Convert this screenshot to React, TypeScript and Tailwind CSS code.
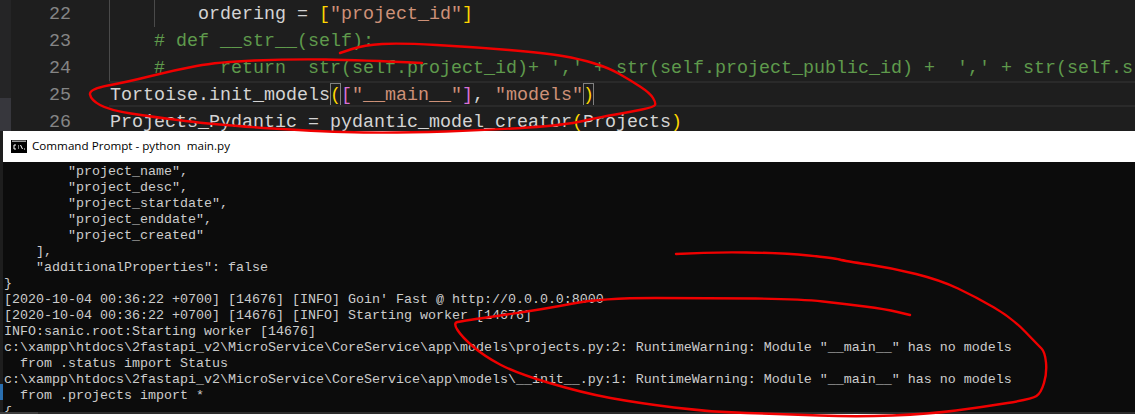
// Screenshot of an editor with a console in front of it, with red marker scribbles on top.
const CODE_FONT = "font-['Liberation_Mono',monospace] text-[18.33px]";

const COMMENT = "text-[#5f9a4c]";
const STRING = "text-[#ce9178]";
const GOLD = "text-[#ffd700]";
const PINK = "text-[#da70d6]";

// marker strokes, in page coordinates
const INK: [number, number][][] = [
  [
    [422, 63], [360, 60], [291, 59], [218, 62], [175, 70], [127, 82], [89, 89], [91, 100], [109, 110],
    [153, 117], [218, 125], [327, 132], [400, 133], [491, 130], [565, 125], [601, 117], [630, 112],
    [654, 107], [656, 103], [650, 93], [630, 80], [609, 68], [580, 59], [545, 53], [473, 47], [400, 43],
    [364, 45], [340, 53],
  ],
  [
    [676, 254], [710, 252], [783, 253], [834, 258], [845, 261], [892, 268], [940, 280], [976, 297],
    [1012, 318], [1038, 345], [1045, 352], [1047, 373], [1041, 393], [1032, 399], [983, 407], [929, 414],
    [856, 417], [783, 414], [710, 412], [638, 403], [583, 393], [516, 373], [484, 356], [462, 337],
    [453, 323], [462, 321], [545, 309], [601, 298], [710, 298], [801, 299], [845, 304], [885, 309], [910, 315],
  ],
];

function smooth(points: [number, number][]) {
  let d = `M${points[0][0]} ${points[0][1]}`;
  for (let i = 1; i < points.length - 1; i++) {
    const [x, y] = points[i];
    const [nx, ny] = points[i + 1];
    d += ` Q${x} ${y} ${(x + nx) / 2} ${(y + ny) / 2}`;
  }
  const last = points[points.length - 1];
  return `${d} L${last[0]} ${last[1]}`;
}

function MatchedParen({ children }: { children: string }) {
  return (
    <span className={`inline-block h-[26px] align-top leading-[25px] outline outline-1 -outline-offset-1 outline-[#808080] ${GOLD}`}>
      {children}
    </span>
  );
}

function CodeLine({
  no,
  guide = false,
  active = false,
  children,
}: {
  no: number;
  guide?: boolean;
  active?: boolean;
  children: React.ReactNode;
}) {
  return (
    <div className="flex h-[27px] leading-[29px]">
      <div className="w-[60px] flex-none text-right text-[#858585]">{no}</div>
      <div className="w-[38px] flex-none" />
      <div
        className={`min-w-0 flex-1 overflow-hidden whitespace-pre text-[#d4d4d4] ${guide ? "border-l border-[#4a4a4a]" : "pl-px"} ${
          active ? "box-border h-[26px] border-y-2 border-[#2a2a2a] leading-[25px]" : ""
        }`}
      >
        {children}
      </div>
    </div>
  );
}

function Editor() {
  return (
    <div className={`flex h-[131px] flex-none overflow-hidden bg-[#1e1e1e] ${CODE_FONT}`}>
      <div className="flex w-[11px] flex-none flex-col justify-end bg-[#252526]">
        <div className="h-[33px] bg-[#37373d]" />
      </div>
      <div className="min-w-0 flex-1">
        <CodeLine no={22} guide>
          <span className="ml-[44px] inline-block h-[27px] border-l border-[#4a4a4a] pl-[43px] align-top">
            ordering = <span className={GOLD}>[</span>
            <span className={STRING}>"project_id"</span>
            <span className={GOLD}>]</span>
          </span>
        </CodeLine>
        <CodeLine no={23} guide>
          <span className={`ml-[44px] ${COMMENT}`}># def __str__(self):</span>
        </CodeLine>
        <CodeLine no={24} guide>
          <span className={`ml-[44px] ${COMMENT}`}>
            {"#     return  str(self.project_id)+ ',' + str(self.project_public_id) +  ',' + str(self.s"}
          </span>
        </CodeLine>
        <CodeLine no={25} active>
          Tortoise.init_models<MatchedParen>(</MatchedParen>
          <span className={PINK}>[</span>
          <span className={STRING}>"__main__"</span>
          <span className={PINK}>]</span>, <span className={STRING}>"models"</span>
          <MatchedParen>)</MatchedParen>
        </CodeLine>
        <CodeLine no={26}>
          Projects_Pydantic = pydantic_model_creator<span className={GOLD}>(</span>
          <span>Projects</span>
          <span className={GOLD}>)</span>
        </CodeLine>
      </div>
    </div>
  );
}

function CmdIcon() {
  return (
    <svg width="16" height="13" viewBox="0 0 16 13" className="flex-none">
      <rect x="0" y="0" width="16" height="13" fill="#000" />
      <rect x="1" y="0.5" width="14" height="1.5" fill="#9a9a9a" />
      <path d="M5 5H3v4h2M7 6h1M7 8h1M9.5 5l2 4M13 9h1" stroke="#fff" fill="none" />
    </svg>
  );
}

const CONSOLE_LINES = [
  '        "project_name",',
  '        "project_desc",',
  '        "project_startdate",',
  '        "project_enddate",',
  '        "project_created"',
  "    ],",
  '    "additionalProperties": false',
  "}",
  "[2020-10-04 00:36:22 +0700] [14676] [INFO] Goin' Fast @ http://0.0.0.0:8000",
  "[2020-10-04 00:36:22 +0700] [14676] [INFO] Starting worker [14676]",
  "INFO:sanic.root:Starting worker [14676]",
  'c:\\xampp\\htdocs\\2fastapi_v2\\MicroService\\CoreService\\app\\models\\projects.py:2: RuntimeWarning: Module "__main__" has no models',
  "  from .status import Status",
  'c:\\xampp\\htdocs\\2fastapi_v2\\MicroService\\CoreService\\app\\models\\__init__.py:1: RuntimeWarning: Module "__main__" has no models',
  "  from .projects import *",
  "{",
];

function Console() {
  return (
    <div className="flex h-[281px] flex-none">
      <div className="flex w-[3px] flex-none flex-col bg-[#1e1e1e]">
        <div className="mt-[253px] h-[16px] bg-[#2a6fb0]" />
      </div>
      <div className="flex min-w-0 flex-1 flex-col">
        <div className="flex h-[31px] flex-none items-center gap-[5px] bg-white pl-[8px] pb-[1px] font-['Open_Sans',sans-serif] text-[11.65px] whitespace-pre text-black">
          <CmdIcon />
          <span>Command Prompt - python  main.py</span>
        </div>
        <div className="min-h-0 flex-1 overflow-hidden bg-[#0c0c0c] pl-px pt-[2px] font-['Liberation_Mono',monospace] text-[13.33px] leading-[16px] whitespace-pre text-[#cccccc]">
          {CONSOLE_LINES.map((line, i) => (
            <div key={i} className="h-[16px]">
              {line}
            </div>
          ))}
        </div>
      </div>
    </div>
  );
}

export default function App() {
  return (
    <div className="relative flex h-[418px] w-[1135px] flex-col overflow-hidden bg-white">
      <Editor />
      <Console />
      <div className="h-[2px] flex-none bg-[#2b2b2b]">
        <div className="h-full w-[38px] bg-[#3d3d3d]" />
      </div>
      <svg className="pointer-events-none absolute inset-0" width="1135" height="418" viewBox="0 0 1135 418" fill="none">
        {INK.map((points, i) => (
          <path key={i} d={smooth(points)} stroke="#f00000" strokeWidth="2.4" strokeLinecap="round" strokeLinejoin="round" />
        ))}
      </svg>
    </div>
  );
}
